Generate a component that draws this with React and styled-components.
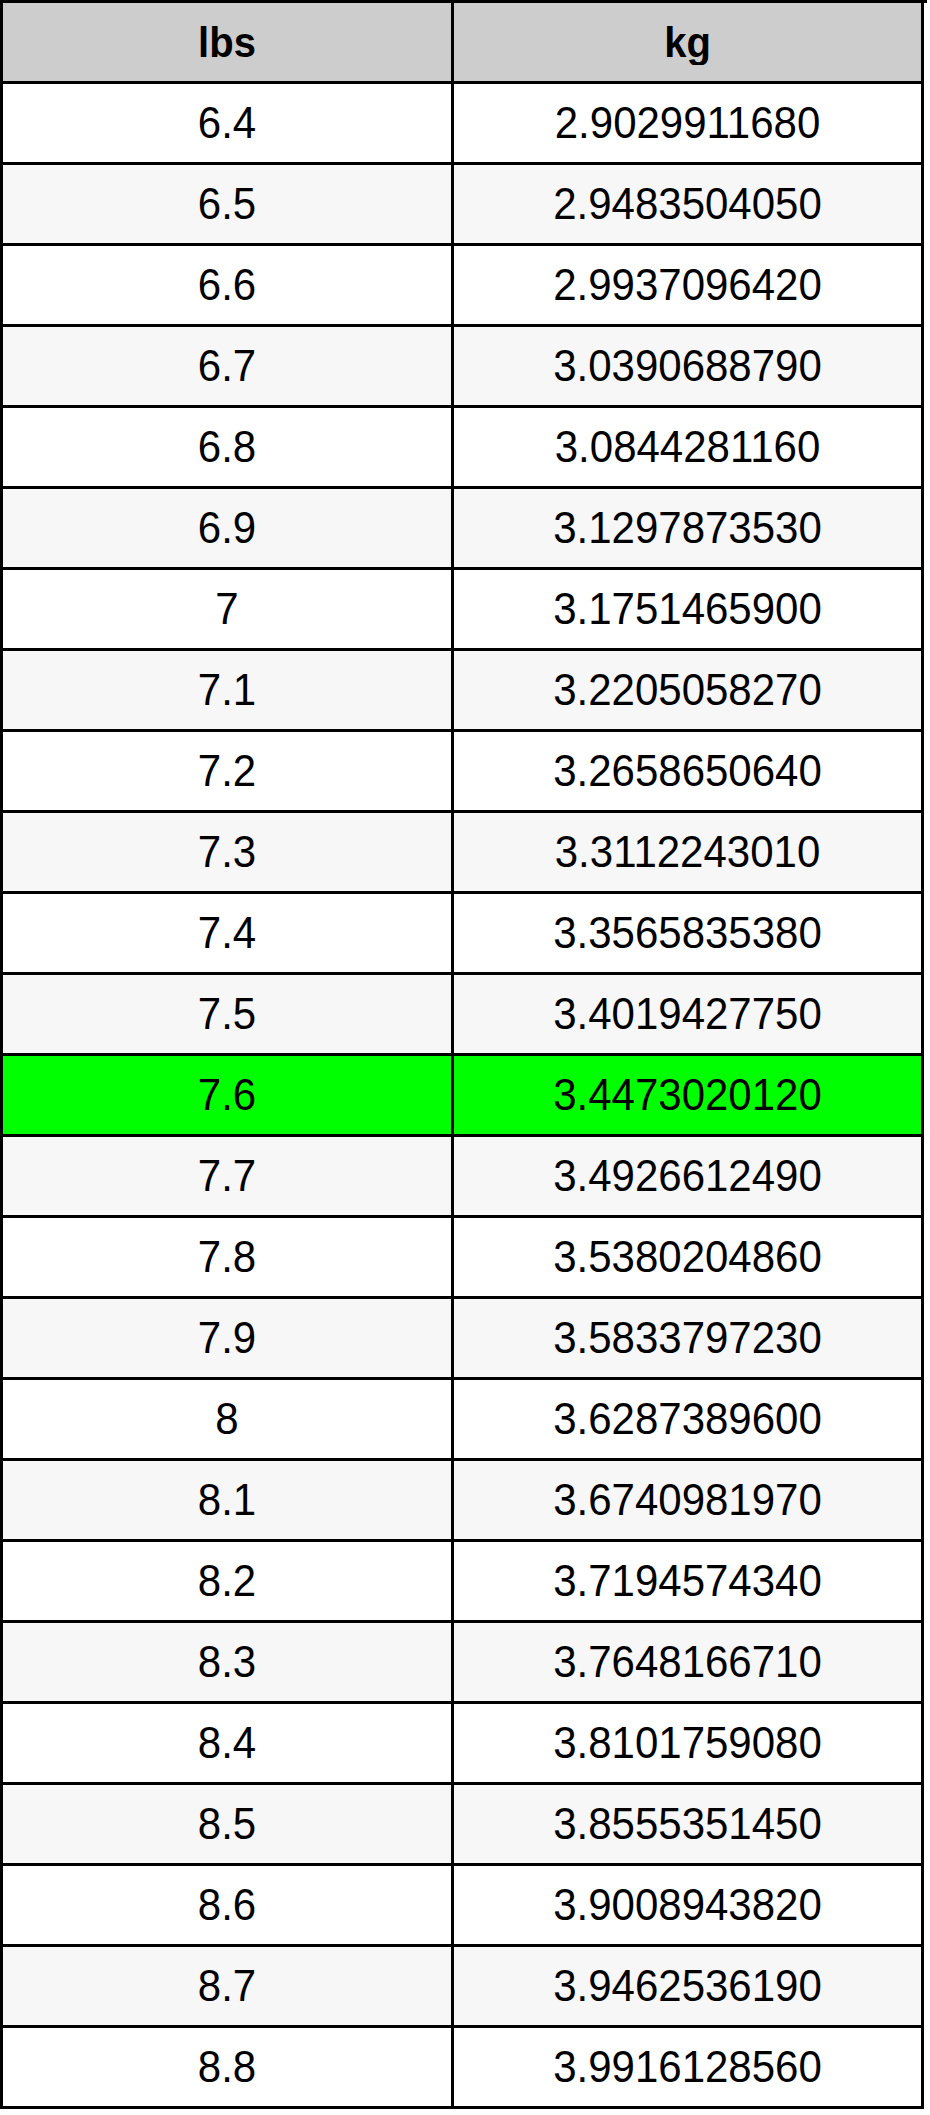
import React from "react";
import styled, { createGlobalStyle } from "styled-components";

const GlobalStyle = createGlobalStyle`
  html, body {
    margin: 0;
    padding: 0;
    background: #ffffff;
  }
  body {
    font-family: "Liberation Sans", Arial, Helvetica, sans-serif;
    color: #000000;
  }
`;

const Table = styled.div`
  display: grid;
  grid-template-columns: 451px 470px;
  width: 924px;
  border-top: 3px solid #000;
  border-left: 3px solid #000;
`;

const Cell = styled.div`
  height: 78px;
  border-right: 3px solid #000;
  border-bottom: 3px solid #000;
  display: flex;
  align-items: center;
  justify-content: center;
  background: ${(p) =>
    p.$kind === "head"
      ? "#cdcdcd"
      : p.$kind === "hit"
      ? "#00ff00"
      : p.$kind === "alt"
      ? "#f7f7f7"
      : "#ffffff"};
  font-size: ${(p) => (p.$kind === "head" ? "40px" : "42px")};
  font-weight: ${(p) => (p.$kind === "head" ? 700 : 400)};
`;

const Text = styled.span`
  display: inline-block;
  transform: scaleY(1.04);
  line-height: 1;
`;

const rows = [
  ["6.4", "2.9029911680"],
  ["6.5", "2.9483504050"],
  ["6.6", "2.9937096420"],
  ["6.7", "3.0390688790"],
  ["6.8", "3.0844281160"],
  ["6.9", "3.1297873530"],
  ["7", "3.1751465900"],
  ["7.1", "3.2205058270"],
  ["7.2", "3.2658650640"],
  ["7.3", "3.3112243010"],
  ["7.4", "3.3565835380"],
  ["7.5", "3.4019427750"],
  ["7.6", "3.4473020120"],
  ["7.7", "3.4926612490"],
  ["7.8", "3.5380204860"],
  ["7.9", "3.5833797230"],
  ["8", "3.6287389600"],
  ["8.1", "3.6740981970"],
  ["8.2", "3.7194574340"],
  ["8.3", "3.7648166710"],
  ["8.4", "3.8101759080"],
  ["8.5", "3.8555351450"],
  ["8.6", "3.9008943820"],
  ["8.7", "3.9462536190"],
  ["8.8", "3.9916128560"],
];

export default function App() {
  return (
    <>
      <GlobalStyle />
      <Table>
        <Cell $kind="head"><Text>lbs</Text></Cell>
        <Cell $kind="head"><Text>kg</Text></Cell>
        {rows.map(([lbs, kg], i) => {
          const kind = lbs === "7.6" ? "hit" : i % 2 === 1 ? "alt" : "plain";
          return (
            <React.Fragment key={lbs}>
              <Cell $kind={kind}><Text>{lbs}</Text></Cell>
              <Cell $kind={kind}><Text>{kg}</Text></Cell>
            </React.Fragment>
          );
        })}
      </Table>
    </>
  );
}
